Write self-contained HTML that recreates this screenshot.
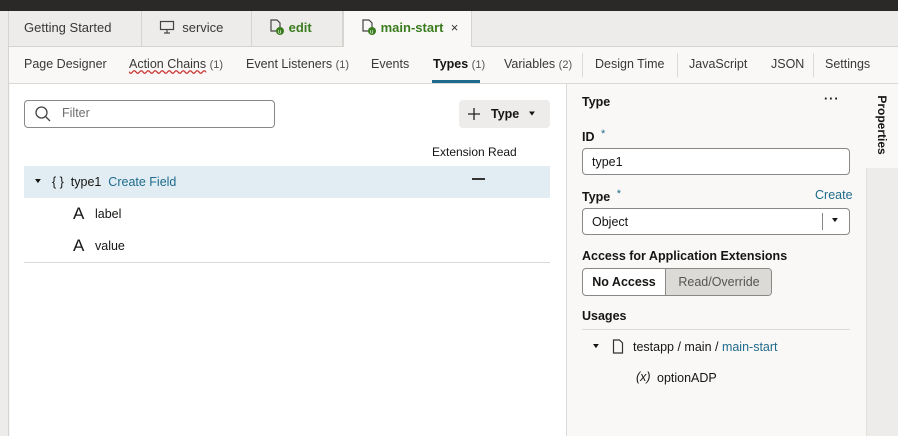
<!DOCTYPE html>
<html><head><style>
*{box-sizing:border-box;margin:0;padding:0}
body{width:898px;height:436px;overflow:hidden;font-family:"Liberation Sans",sans-serif;font-size:12.5px;color:#161513;background:#f9f8f6;position:relative}
.a{position:absolute}
.top{left:0;top:0;width:898px;height:11px;background:#2b2927}
.strip{left:0;top:11px;width:9px;height:425px;background:#edecea;border-right:1px solid #d6d4d1}
.tabs{left:9px;top:11px;width:889px;height:36px;background:#edecea;border-bottom:1px solid #d6d4d1}
.tab{top:0;height:35px;border-right:1px solid #d6d4d1;line-height:34px;font-size:13px;color:#3a3836;padding-left:15px}
.sub{left:9px;top:47px;width:889px;height:37px;background:#f9f8f6;border-bottom:1px solid #dcdad7}
.s{top:0;line-height:35px;font-size:12.5px;color:#3a3836}
.s small{font-size:11px;color:#555}
.left{left:10px;top:84px;width:557px;height:352px;background:#fff;border-right:1px solid #dcdad7}
.g{color:#3a7d1e;font-weight:bold}
.tri{font-size:10px;transform:scaleY(0.7)}
</style></head><body>
<div class="a top"></div>
<div class="a strip"></div>
<div class="a tabs">
 <div class="a tab" style="left:0;width:133px">Getting Started</div>
 <div class="a tab" style="left:133px;width:110px;padding-left:17px"><svg width="16" height="14" style="vertical-align:-2px" viewBox="0 0 16 14"><rect x="1.5" y="1.5" width="13" height="8" fill="none" stroke="#444" stroke-width="1.2"/><path d="M8 10v3M5 13h6" stroke="#444" stroke-width="1.2"/></svg> &nbsp;service</div>
 <div class="a tab" style="left:243px;width:91px;padding-left:17px"><svg width="16" height="16" style="vertical-align:-3px" viewBox="0 0 16 16"><path d="M2 1h6l3 3v8H2z" fill="none" stroke="#444" stroke-width="1.2"/><circle cx="11" cy="12" r="4" fill="#3a7d1e"/><text x="9" y="14.5" font-size="6" fill="#fff" font-family="Liberation Sans">u</text></svg> <span class="g">edit</span></div>
 <div class="a tab" style="left:334px;width:129px;background:#f9f8f6;height:36px;border-left:1px solid #d6d4d1;padding-left:17px"><svg width="16" height="16" style="vertical-align:-3px" viewBox="0 0 16 16"><path d="M2 1h6l3 3v8H2z" fill="none" stroke="#444" stroke-width="1.2"/><circle cx="11" cy="12" r="4" fill="#3a7d1e"/><text x="9" y="14.5" font-size="6" fill="#fff" font-family="Liberation Sans">u</text></svg> <span class="g">main-start</span> &nbsp;<span style="color:#333">×</span></div>
</div>
<div class="a sub">
 <div class="a s" style="left:15px">Page Designer</div>
 <div class="a s" style="left:120px"><span style="text-decoration:underline wavy #c33">Action Chains</span> <small>(1)</small></div>
 <div class="a s" style="left:237px">Event Listeners <small>(1)</small></div>
 <div class="a s" style="left:362px">Events</div>
 <div class="a s" style="left:424px;color:#161513;font-weight:bold">Types <small style="font-weight:normal">(1)</small></div>
 <div class="a" style="left:423px;top:33px;width:48px;height:3px;background:#1f6b8d"></div>
 <div class="a s" style="left:495px">Variables <small>(2)</small></div>
 <div class="a" style="left:573px;top:6px;width:1px;height:24px;background:#dcdad7"></div>
 <div class="a s" style="left:586px">Design Time</div>
 <div class="a" style="left:668px;top:6px;width:1px;height:24px;background:#dcdad7"></div>
 <div class="a s" style="left:680px">JavaScript</div>
 <div class="a s" style="left:762px">JSON</div>
 <div class="a" style="left:804px;top:6px;width:1px;height:24px;background:#dcdad7"></div>
 <div class="a s" style="left:816px">Settings</div>
</div>
<div class="a left"></div>
<div class="a" style="left:24px;top:100px;width:251px;height:28px;border:1px solid #8a8886;border-radius:4px;background:#fff"></div>
<svg class="a" style="left:34px;top:105px" width="18" height="18" viewBox="0 0 18 18"><circle cx="7.5" cy="7.5" r="5.5" fill="none" stroke="#444" stroke-width="1.3"/><path d="M11.5 11.5l4.5 4.5" stroke="#444" stroke-width="1.3"/></svg>
<div class="a" style="left:62px;top:106px;color:#6f6d6b;font-size:12.5px">Filter</div>
<div class="a" style="left:459px;top:100px;width:91px;height:28px;background:#edecea;border-radius:4px"></div>
<svg class="a" style="left:467px;top:107px" width="14" height="14" viewBox="0 0 14 14"><path d="M7 1v12M1 7h12" stroke="#222" stroke-width="1.3"/></svg>
<div class="a" style="left:491px;top:107px;font-weight:bold;font-size:12.5px">Type</div>
<div class="a tri" style="left:527px;top:108px">▼</div>
<div class="a" style="left:432px;top:145px;font-size:12px">Extension Read</div>
<div class="a" style="left:24px;top:166px;width:526px;height:32px;background:#e1edf3"></div>
<div class="a tri" style="left:33px;top:176px">▼</div>
<div class="a" style="left:52px;top:175px;font-size:12.5px">{ } &nbsp;type1 &nbsp;<span style="color:#1f6b8d">Create Field</span></div>
<div class="a" style="left:472px;top:178px;width:13px;height:2px;background:#333"></div>
<div class="a" style="left:73px;top:204px;font-size:17px;font-weight:300">A</div>
<div class="a" style="left:95px;top:207px">label</div>
<div class="a" style="left:73px;top:236px;font-size:17px">A</div>
<div class="a" style="left:95px;top:239px">value</div>
<div class="a" style="left:24px;top:262px;width:526px;height:1px;background:#dcdad7"></div>
<!-- right panel -->
<div class="a" style="left:582px;top:95px;font-weight:bold;font-size:12.5px">Type</div>
<div class="a" style="left:824px;top:92px;font-weight:bold;letter-spacing:1px">···</div>
<div class="a" style="left:582px;top:128px;font-weight:bold">ID <span style="color:#1f6b8d;font-weight:normal;font-size:11px;vertical-align:4px">&nbsp;*</span></div>
<div class="a" style="left:582px;top:148px;width:268px;height:27px;border:1px solid #8a8886;border-radius:4px;background:#fff;padding:6px 9px">type1</div>
<div class="a" style="left:582px;top:188px;font-weight:bold">Type <span style="color:#1f6b8d;font-weight:normal;font-size:11px;vertical-align:4px">&nbsp;*</span></div>
<div class="a" style="left:815px;top:188px;color:#1f6b8d">Create</div>
<div class="a" style="left:582px;top:208px;width:268px;height:27px;border:1px solid #8a8886;border-radius:4px;background:#fff;padding:6px 9px">Object</div>
<div class="a" style="left:822px;top:213px;width:1px;height:17px;background:#8a8886"></div>
<div class="a tri" style="left:830px;top:215px">▼</div>
<div class="a" style="left:582px;top:249px;font-weight:bold">Access for Application Extensions</div>
<div class="a" style="left:582px;top:268px;width:190px;height:28px;border:1px solid #8a8886;border-radius:4px;background:#fff;overflow:hidden">
 <div class="a" style="left:0;top:0;width:82px;height:26px;line-height:26px;text-align:center;font-weight:bold">No Access</div>
 <div class="a" style="left:82px;top:0;width:107px;height:26px;line-height:26px;text-align:center;background:#dcdad7;color:#555;border-left:1px solid #8a8886">Read/Override</div>
</div>
<div class="a" style="left:582px;top:309px;font-weight:bold">Usages</div>
<div class="a" style="left:582px;top:329px;width:268px;height:1px;background:#dcdad7"></div>
<div class="a tri" style="left:591px;top:341px">▼</div>
<svg class="a" style="left:612px;top:339px" width="12" height="15" viewBox="0 0 12 15"><path d="M1.5 1h6l3 3v10h-9z" fill="none" stroke="#333" stroke-width="1.2"/></svg>
<div class="a" style="left:633px;top:340px">testapp / main / <span style="color:#1f6b8d">main-start</span></div>
<div class="a" style="left:636px;top:370px;font-style:italic">(x)</div>
<div class="a" style="left:657px;top:371px">optionADP</div>
<!-- properties side -->
<div class="a" style="left:866px;top:84px;width:32px;height:84px;background:#f9f8f6"></div>
<div class="a" style="left:866px;top:168px;width:32px;height:268px;background:#edecea;border-left:1px solid #e3e1de"></div>
<div class="a" style="left:852px;top:118px;transform:rotate(90deg);transform-origin:center;width:60px;text-align:center;font-weight:bold;font-size:12px;white-space:nowrap">Properties</div>
</body></html>
